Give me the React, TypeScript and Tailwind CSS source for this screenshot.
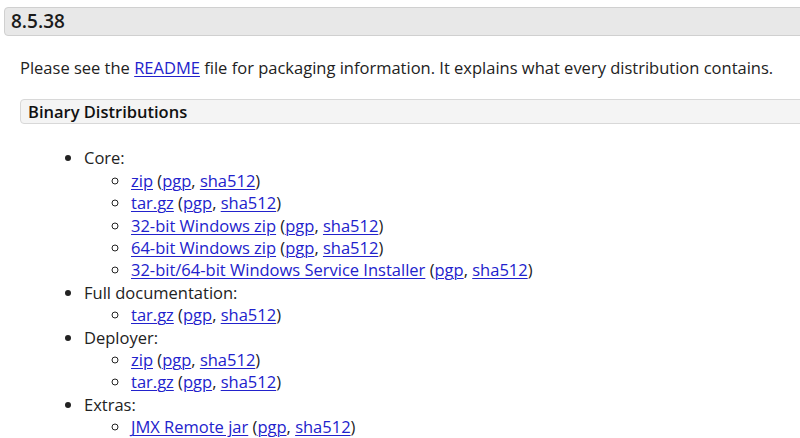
import React from "react";

const L = ({ children }: { children: React.ReactNode }) => (
  <a href="#" className="text-[#2222cc] underline decoration-1 underline-offset-[2px]">{children}</a>
);

const Sub = ({ name }: { name: string }) => (
  <li className="list-[circle]">
    <L>{name}</L> (<L>pgp</L>, <L>sha512</L>)
  </li>
);

export default function App() {
  return (
    <div className="bg-white w-[800px] h-[438px] overflow-hidden text-[16.5px] leading-[22.4px] text-[#222]" style={{ fontFamily: '"Open Sans", sans-serif' }}>
      <div className="ml-[4px] mr-[-20px] mt-[7px] h-[29px] border border-[#d0d0d0] rounded-l-[4px] bg-[#e8e8e8] pl-[6px] flex items-center">
        <span className="text-[19px] font-semibold text-[#1a1a1a]">8.5.38</span>
      </div>
      <p className="ml-[20px] mt-[21px]">
        Please see the <L>README</L> file for packaging information. It explains what every distribution contains.
      </p>
      <div className="ml-[20px] mr-[-20px] mt-[20px] h-[25px] border border-[#d8d8d8] rounded-l-[4px] bg-[#f4f4f4] pl-[7px] flex items-center">
        <span className="font-semibold text-[#111]">Binary Distributions</span>
      </div>
      <ul className="list-disc pl-[84px] mt-[23px]">
        <li>
          Core:
          <ul className="pl-[47px]">
            <Sub name="zip" />
            <Sub name="tar.gz" />
            <Sub name="32-bit Windows zip" />
            <Sub name="64-bit Windows zip" />
            <Sub name="32-bit/64-bit Windows Service Installer" />
          </ul>
        </li>
        <li>
          Full documentation:
          <ul className="pl-[47px]">
            <Sub name="tar.gz" />
          </ul>
        </li>
        <li>
          Deployer:
          <ul className="pl-[47px]">
            <Sub name="zip" />
            <Sub name="tar.gz" />
          </ul>
        </li>
        <li>
          Extras:
          <ul className="pl-[47px]">
            <Sub name="JMX Remote jar" />
          </ul>
        </li>
      </ul>
    </div>
  );
}
